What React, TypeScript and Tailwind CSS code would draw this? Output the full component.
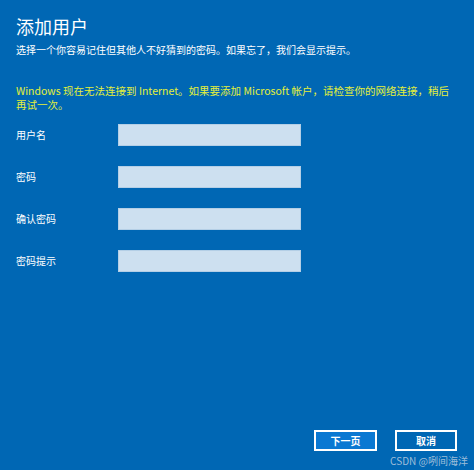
import React from 'react';

const fields = ['用户名', '密码', '确认密码', '密码提示'];

const App: React.FC = () => {
  return (
    <div
      className="relative w-[474px] h-[470px] bg-[#0067b4] text-white flex flex-col pl-4 overflow-hidden"
      style={{ fontFamily: '"Noto Sans CJK SC", "Noto Sans", sans-serif' }}
    >
      <h1 className="mt-[14px] text-[18px] leading-[24px] font-normal">添加用户</h1>
      <p className="mt-[5px] text-[10px] leading-[14px]">
        选择一个你容易记住但其他人不好猜到的密码。如果忘了，我们会显示提示。
      </p>
      <p className="mt-[27px] text-[10.5px] leading-[14px] text-[#e4f03a]">
        Windows 现在无法连接到 Internet。如果要添加 Microsoft 帐户，请检查你的网络连接，稍后
        <br />
        再试一次。
      </p>

      <div className="mt-[12px] flex flex-col gap-[20px]">
        {fields.map(label => (
          <div key={label} className="flex items-center h-[22px]">
            <label className="w-[102px] text-[10px] leading-[14px]">{label}</label>
            <input
              type="text"
              className="w-[183px] h-[22px] bg-[#cde0f0] border border-[#b4cfe6] outline-none"
            />
          </div>
        ))}
      </div>

      <div className="flex-1" />

      <div className="flex justify-end gap-[18px] pr-[17px] mb-[19px]">
        <button className="w-[63px] h-[21px] border-2 border-white bg-[#0a78d2] text-[10px] font-bold leading-none">
          下一页
        </button>
        <button className="w-[62px] h-[21px] border-2 border-white bg-[#0067b4] text-[10px] font-bold leading-none">
          取消
        </button>
      </div>

      <span className="absolute right-[6px] bottom-[3px] text-[10px] leading-[12px] text-[#c7d5e3]/80">
        CSDN @咧间海洋
      </span>
    </div>
  );
};

export default App;
